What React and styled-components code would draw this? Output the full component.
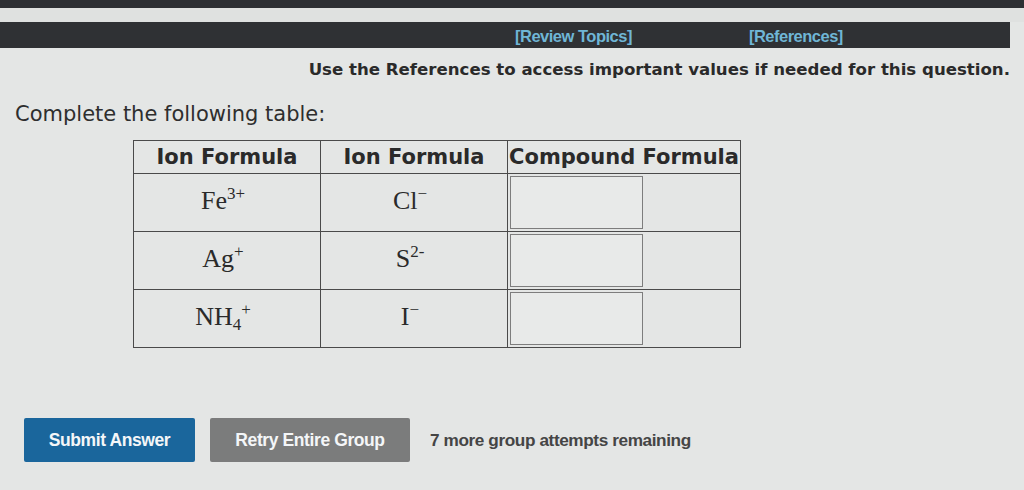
import styled, { createGlobalStyle } from 'styled-components';

const GlobalStyle = createGlobalStyle`
  html, body {
    margin: 0;
    padding: 0;
    background: #e4e6e5;
  }
  #root {
    width: 1024px;
    height: 490px;
    overflow: hidden;
  }
`;

const Page = styled.div`
  display: flex;
  flex-direction: column;
  align-items: flex-start;
  width: 1024px;
  height: 490px;
  background: #e4e6e5;
  color: #2c2c2c;
`;

const TopStrip = styled.div`
  align-self: stretch;
  height: 8px;
  background: #2d2f33;
`;

const Gap = styled.div`
  align-self: stretch;
  height: 14px;
  background: #dfe1e0;
`;

const LinkBar = styled.div`
  display: flex;
  align-items: center;
  height: 26px;
  width: 1010px;
  background: #2f3134;
  padding-left: 515px;
  box-sizing: border-box;
`;

const BarLink = styled.a`
  font-family: 'Liberation Sans', Arial, sans-serif;
  font-weight: 700;
  font-size: 16.5px;
  letter-spacing: -0.5px;
  color: #6fb6d6;
  text-decoration: none;
  margin-right: ${({ $gap }) => $gap || 0}px;
  padding-top: 2px;
`;

const Notice = styled.div`
  align-self: stretch;
  font-family: 'DejaVu Sans', Verdana, sans-serif;
  font-weight: 700;
  font-size: 16.6px;
  line-height: 20px;
  text-align: right;
  padding: 12px 14px 0 0;
  color: #2a2a2a;
`;

const Prompt = styled.div`
  font-family: 'DejaVu Sans', Verdana, sans-serif;
  font-size: 21px;
  line-height: 25px;
  margin: 22px 0 0 15px;
  color: #2e2e2e;
`;

const Table = styled.table`
  border-collapse: collapse;
  table-layout: fixed;
  width: 604px;
  margin: 13px 0 0 133px;
  border: 1px solid #4a4a4a;
`;

const Th = styled.th`
  font-family: 'DejaVu Sans', Verdana, sans-serif;
  font-weight: 700;
  font-size: 21px;
  color: #2a2a2a;
  height: 32px;
  width: ${({ $w }) => $w}px;
  padding: 0;
  border: 1px solid #4a4a4a;
  text-align: center;
  white-space: nowrap;
  overflow: visible;
`;

const Td = styled.td`
  font-family: 'Liberation Serif', 'Times New Roman', serif;
  font-size: 26px;
  color: #2a2a2a;
  height: 57px;
  padding: 0;
  border: 1px solid #4a4a4a;
  text-align: center;
  vertical-align: middle;
  line-height: 1;
`;

const AnswerTd = styled(Td)`
  text-align: left;
  padding-left: 2px;
`;

const Formula = styled.span`
  display: inline-block;
  position: relative;
  top: -2px;
  left: ${({ $shift }) => $shift || 0}px;
`;

const Sup = styled.sup`
  font-size: 17px;
  vertical-align: 10px;
  line-height: 0;
`;

const Sub = styled.sub`
  font-size: 17px;
  vertical-align: -5px;
  line-height: 0;
`;

const AnswerBox = styled.input`
  display: block;
  width: 133px;
  height: 53px;
  box-sizing: border-box;
  border: 1px solid #7d7d7d;
  background: #e8eae9;
`;

const Footer = styled.div`
  display: flex;
  align-items: center;
  gap: 15px;
  margin: 70px 0 0 24px;
`;

const Button = styled.button`
  height: 44px;
  padding: 0;
  width: ${({ $w }) => $w}px;
  border: none;
  border-radius: 2px;
  background: ${({ $bg }) => $bg};
  color: #f4f6f8;
  font-family: 'Liberation Sans', Arial, sans-serif;
  font-weight: 700;
  font-size: 17.5px;
  letter-spacing: -0.4px;
`;

const Attempts = styled.span`
  font-family: 'Liberation Sans', Arial, sans-serif;
  font-weight: 700;
  font-size: 17.2px;
  letter-spacing: -0.4px;
  color: #454545;
  margin-left: 5px;
`;

const rows = [
  { a: <>Fe<Sup>3+</Sup></>, b: <>Cl<Sup>−</Sup></> },
  { a: <>Ag<Sup>+</Sup></>, b: <>S<Sup>2-</Sup></> },
  { a: <>NH<Sub>4</Sub><Sup>+</Sup></>, b: <>I<Sup>−</Sup></> },
];

export default function App() {
  return (
    <Page>
      <GlobalStyle />
      <TopStrip />
      <Gap />
      <LinkBar>
        <BarLink href="#" $gap={117}>[Review Topics]</BarLink>
        <BarLink href="#">[References]</BarLink>
      </LinkBar>
      <Notice>Use the References to access important values if needed for this question.</Notice>
      <Prompt>Complete the following table:</Prompt>
      <Table>
        <thead>
          <tr>
            <Th $w={186}>Ion Formula</Th>
            <Th $w={186}>Ion Formula</Th>
            <Th $w={232}>Compound Formula</Th>
          </tr>
        </thead>
        <tbody>
          {rows.map((r, i) => (
            <tr key={i}>
              <Td><Formula $shift={-4}>{r.a}</Formula></Td>
              <Td><Formula $shift={-4}>{r.b}</Formula></Td>
              <AnswerTd><AnswerBox type="text" /></AnswerTd>
            </tr>
          ))}
        </tbody>
      </Table>
      <Footer>
        <Button $w={171} $bg="#1a669c">Submit Answer</Button>
        <Button $w={200} $bg="#7b7c7c">Retry Entire Group</Button>
        <Attempts>7 more group attempts remaining</Attempts>
      </Footer>
    </Page>
  );
}
